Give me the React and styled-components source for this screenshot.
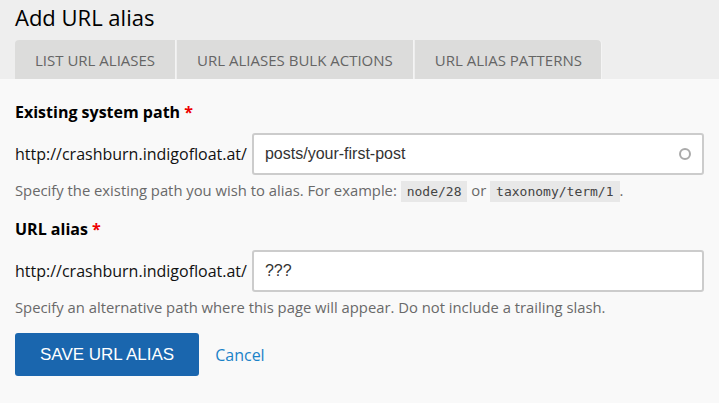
import React from 'react';
import styled, { createGlobalStyle } from 'styled-components';

const GlobalStyle = createGlobalStyle`
    body {
        margin: 0;
        background: #f9f9f9;
        font-family: "Open Sans", "Liberation Sans", sans-serif;
        color: #222;
    }
`

const Page = styled.div`
    width: 719px;
    height: 403px;
    overflow: hidden;
`

const Header = styled.div`
    background: #eeeeee;
    padding: 0 15px;
`

const Title = styled.h1`
    margin: 0;
    padding-top: 2px;
    height: 38px;
    font-size: 22px;
    font-weight: 400;
    color: #000;
`

const Tabs = styled.ul`
    display: flex;
    gap: 2px;
    margin: 0;
    padding: 0;
    list-style: none;
    background: #eeeeee;
`

const Tab = styled.li`
    height: 39px;
    display: flex;
    align-items: center;
    padding: 0 20px;
    background: #dcdcdb;
    color: #656565;
    font-size: 15px;
    text-transform: uppercase;
    box-shadow: 1px 0 0 #f4f4f4;
    &:first-child { border-top-left-radius: 4px; }
    &:last-child { border-top-right-radius: 4px; padding-right: 19px; }
`

const Content = styled.div`
    background: #f9f9f9;
    padding: 22px 15px 0;
`

const Field = styled.div`
    margin-bottom: 16px;
`

const Label = styled.div`
    font-weight: 700;
    font-size: 16px;
    line-height: 22px;
    color: #000;
    margin-bottom: 10px;
`

const Required = styled.span`
    color: #e00;
`

const InputRow = styled.div`
    display: flex;
    align-items: center;
    gap: 5px;
`

const Prefix = styled.span`
    font-size: 16px;
    color: #111;
`

const InputBox = styled.div`
    position: relative;
    flex: 1;
`

const Input = styled.input`
    display: block;
    box-sizing: border-box;
    width: 100%;
    height: 42px;
    padding: 0 11px;
    border: 2px solid #ccc;
    border-radius: 3px;
    background: #fff;
    font-family: "Liberation Sans", Arial, sans-serif;
    font-size: 16px;
    color: #333;
    outline: none;
`

const Throbber = styled.span`
    position: absolute;
    right: 13px;
    top: 50%;
    width: 8px;
    height: 8px;
    margin-top: -6px;
    border: 2px solid #aaa;
    border-radius: 50%;
`

const Description = styled.div`
    margin-top: 5px;
    font-size: 14.8px;
    line-height: 21px;
    color: #696969;
`

const Code = styled.code`
    background: #e8e8e8;
    padding: 3px 6px;
    font-family: "DejaVu Sans Mono", monospace;
    font-size: 13px;
    color: #444;
`

const Actions = styled.div`
    display: flex;
    align-items: center;
    gap: 16px;
    margin-top: -1px;
`

const Button = styled.button`
    height: 43px;
    padding: 0 25px;
    border: none;
    border-radius: 3px;
    background: #1a66ae;
    color: #fff;
    font-family: "Liberation Sans", Arial, sans-serif;
    font-size: 17px;
    text-transform: uppercase;
`

const Link = styled.a`
    color: #1b82c8;
    font-size: 16px;
    text-decoration: none;
`

export default function App() {
    return (
        <Page>
            <GlobalStyle />
            <Header>
                <Title>Add URL alias</Title>
                <Tabs>
                    <Tab>List URL aliases</Tab>
                    <Tab>URL aliases bulk actions</Tab>
                    <Tab>URL alias patterns</Tab>
                </Tabs>
            </Header>
            <Content>
                <Field>
                    <Label>Existing system path <Required>*</Required></Label>
                    <InputRow>
                        <Prefix>http://crashburn.indigofloat.at/</Prefix>
                        <InputBox>
                            <Input defaultValue="posts/your-first-post" />
                            <Throbber />
                        </InputBox>
                    </InputRow>
                    <Description>
                        Specify the existing path you wish to alias. For example: <Code>node/28</Code> or <Code>taxonomy/term/1</Code>.
                    </Description>
                </Field>
                <Field>
                    <Label>URL alias <Required>*</Required></Label>
                    <InputRow>
                        <Prefix>http://crashburn.indigofloat.at/</Prefix>
                        <InputBox>
                            <Input defaultValue="???" />
                        </InputBox>
                    </InputRow>
                    <Description>
                        Specify an alternative path where this page will appear. Do not include a trailing slash.
                    </Description>
                </Field>
                <Actions>
                    <Button>Save URL alias</Button>
                    <Link href="#">Cancel</Link>
                </Actions>
            </Content>
        </Page>
    );
}
